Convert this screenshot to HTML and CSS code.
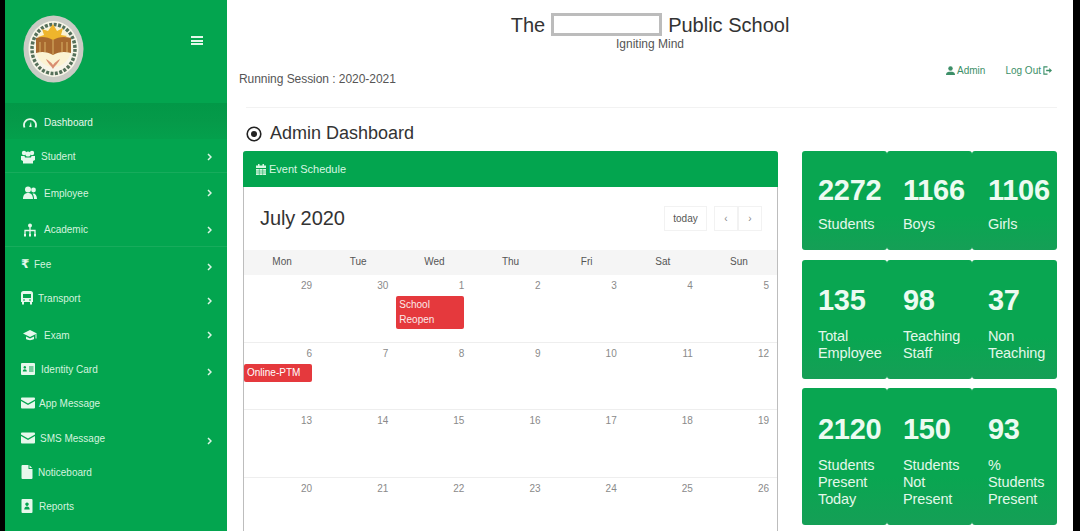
FILE: index.html
```html
<!DOCTYPE html>
<html lang="en">
<head>
<meta charset="utf-8">
<title>Admin Dashboard</title>
<link rel="stylesheet" href="styles.css">
</head>
<body>
<aside class="sidebar">
  <div class="brand">
    <svg class="logo" viewBox="0 0 61 68" aria-label="School crest">
      <ellipse cx="30.5" cy="34" rx="30" ry="33.5" fill="#c9cbc4"/>
      <ellipse cx="30.5" cy="34" rx="25" ry="28" fill="#f7f5e8"/>
      <ellipse cx="30.5" cy="34" rx="21.5" ry="24.5" fill="none" stroke="#55705a" stroke-width="3.5" stroke-dasharray="3 1.5"/>
      <ellipse cx="30.5" cy="32" rx="18" ry="20" fill="#fbf3d2"/>
      <path d="M30 9l4 7 6-3-2 7 6 1-7 5H21l-6-4 6-2-2-6 6 2z" fill="#eeb52c"/>
      <path d="M13 23c6-2 12-1 17 2 5-3 11-4 18-2v15c-7-2-13-1-18 2-5-3-11-4-17-2z" fill="#a8692f"/>
      <path d="M30 25v15M17 27v10M22 27v10M39 27v10M44 27v10" stroke="#c99a55" stroke-width="1.5"/>
      <path d="M23 44c2 5 5 6 7 10 2-4 5-5 7-10-3 2-5 3-7 6-2-3-4-4-7-6z" fill="#d98f72"/>
    </svg>
    <button class="burger" aria-label="Toggle menu"><span></span><span></span><span></span></button>
  </div>
  <nav class="menu">
    <a class="item active">
      <svg class="ic gap-dash" viewBox="0 0 14 14"><path d="M1.500 12.500A6 6 0 1 1 12.500 12.500" fill="none" stroke="currentColor" stroke-width="1.800"/><path d="M6.200 12L8 6.500l.6 5.500z" fill="currentColor"/></svg>
      <span>Dashboard</span></a>
    <a class="item lined outdent">
      <svg class="ic gap-student" viewBox="0 0 14 14"><circle cx="3" cy="3" r="2.200" fill="currentColor"/><circle cx="11" cy="3" r="2.200" fill="currentColor"/><circle cx="7" cy="4" r="2.600" fill="currentColor"/><path d="M0 6h3.500L4 7.500h6L10.500 6H14v4l-2 1v2.500H2V11l-2-1z" fill="currentColor"/></svg>
      <span>Student</span><svg class="chev" viewBox="0 0 5 8"><path d="M1 1l3 3-3 3" fill="none" stroke="currentColor" stroke-width="1.500"/></svg></a>
    <a class="item tall">
      <svg class="ic gap-dash" viewBox="0 0 14 14"><circle cx="5" cy="3.500" r="3" fill="currentColor"/><circle cx="10.500" cy="4" r="2.400" fill="currentColor"/><path d="M0 13c0-4 2-6 5-6s5 2 5 6zM11 13c0-2-.5-4-1.500-5.500 2.500-.5 4.500 1.500 4.500 5.500z" fill="currentColor"/></svg>
      <span>Employee</span><svg class="chev" viewBox="0 0 5 8"><path d="M1 1l3 3-3 3" fill="none" stroke="currentColor" stroke-width="1.500"/></svg></a>
    <a class="item tall lined">
      <svg class="ic gap-dash" viewBox="0 0 14 14"><circle cx="7" cy="2.500" r="2" fill="currentColor"/><path d="M7 4v3M2 13V7.500h10V13M7 7.500V13" fill="none" stroke="currentColor" stroke-width="1.300"/><path d="M1 11h2v2.500H1zM6 11h2v2.500H6zM11 11h2v2.500h-2z" fill="currentColor"/></svg>
      <span>Academic</span><svg class="chev" viewBox="0 0 5 8"><path d="M1 1l3 3-3 3" fill="none" stroke="currentColor" stroke-width="1.500"/></svg></a>
    <a class="item outdent">
      <span class="rupee">₹</span>
      <span>Fee</span><svg class="chev" viewBox="0 0 5 8"><path d="M1 1l3 3-3 3" fill="none" stroke="currentColor" stroke-width="1.500"/></svg></a>
    <a class="item outdent">
      <svg class="ic ic-s gap-bus" viewBox="0 0 12 14"><path fill-rule="evenodd" d="M2.500 0h7A2.500 2.500 0 0 1 12 2.500V11h-1v2.500H9V11H3v2.500H1V11H0V2.500A2.500 2.500 0 0 1 2.500 0zM2 3v4h8V3zM2 8.500v1h2v-1zM8 8.500v1h2v-1z" fill="currentColor"/></svg>
      <span>Transport</span><svg class="chev" viewBox="0 0 5 8"><path d="M1 1l3 3-3 3" fill="none" stroke="currentColor" stroke-width="1.500"/></svg></a>
    <a class="item tall">
      <svg class="ic gap-dash" viewBox="0 0 14 14"><path d="M7 2l7 3.500L7 9 0 5.500z" fill="currentColor"/><path d="M3 8.500V11c2 1.500 6 1.500 8 0V8.500L7 10.500zM12.500 6.500v4h1v-4.500z" fill="currentColor"/></svg>
      <span>Exam</span><svg class="chev" viewBox="0 0 5 8"><path d="M1 1l3 3-3 3" fill="none" stroke="currentColor" stroke-width="1.500"/></svg></a>
    <a class="item outdent">
      <svg class="ic gap-id" viewBox="0 0 14 12"><path fill-rule="evenodd" d="M1 0h12a1 1 0 0 1 1 1v10a1 1 0 0 1-1 1H1a1 1 0 0 1-1-1V1a1 1 0 0 1 1-1zM3.800 3a1.300 1.300 0 1 0 .01 0zM1.800 8.500h4c0-1.500-.8-2.200-2-2.200s-2 .7-2 2.200zM8 3.500v1h4.500v-1zM8 5.500v1h4.500v-1zM8 7.500v1h4.500v-1z" fill="currentColor"/></svg>
      <span>Identity Card</span><svg class="chev" viewBox="0 0 5 8"><path d="M1 1l3 3-3 3" fill="none" stroke="currentColor" stroke-width="1.500"/></svg></a>
    <a class="item outdent">
      <svg class="ic gap-app" viewBox="0 0 14 11"><path d="M1 0h12a1 1 0 0 1 1 1v1L7 6 0 2V1a1 1 0 0 1 1-1zM0 3.500L7 7.500l7-4V10a1 1 0 0 1-1 1H1a1 1 0 0 1-1-1z" fill="currentColor"/></svg>
      <span>App Message</span></a>
    <a class="item mid outdent">
      <svg class="ic gap-sms" viewBox="0 0 14 11"><path d="M1 0h12a1 1 0 0 1 1 1v1L7 6 0 2V1a1 1 0 0 1 1-1zM0 3.500L7 7.500l7-4V10a1 1 0 0 1-1 1H1a1 1 0 0 1-1-1z" fill="currentColor"/></svg>
      <span>SMS Message</span><svg class="chev" viewBox="0 0 5 8"><path d="M1 1l3 3-3 3" fill="none" stroke="currentColor" stroke-width="1.500"/></svg></a>
    <a class="item outdent">
      <svg class="ic ic-s gap-bus" viewBox="0 0 11 14"><path d="M1 0h6v4h4v9a1 1 0 0 1-1 1H1a1 1 0 0 1-1-1V1a1 1 0 0 1 1-1zM8 .3L10.700 3H8z" fill="currentColor"/></svg>
      <span>Noticeboard</span></a>
    <a class="item outdent">
      <svg class="ic ic-s gap-rep" viewBox="0 0 11 14"><path fill-rule="evenodd" d="M1 0h9a1 1 0 0 1 1 1v12a1 1 0 0 1-1 1H1a1 1 0 0 1-1-1V1a1 1 0 0 1 1-1zM5.500 3.500a1.700 1.700 0 1 0 .01 0zM2.800 10.500h5.400c0-2-1-3-2.700-3s-2.700 1-2.700 3z" fill="currentColor"/></svg>
      <span>Reports</span></a>
  </nav>
</aside>

<main class="main">
  <header class="top">
    <h1 class="school"><span class="school-text">The</span><span class="redact"></span><span class="school-text">Public School</span></h1>
    <p class="motto">Igniting Mind</p>
    <div class="topbar">
      <p class="session">Running Session : 2020-2021</p>
      <div class="links">
        <a class="link"><svg class="link-ic" viewBox="0 0 10 10"><circle cx="5" cy="2.800" r="2.500" fill="currentColor"/><path d="M0 10c0-2 1-3 3-3.500h4c2 .5 3 1.500 3 3.500z" fill="currentColor"/></svg><span>Admin</span></a>
        <a class="link"><span>Log Out</span><svg class="link-ic" viewBox="0 0 10 10"><path d="M5 1H1v8h4" fill="none" stroke="currentColor" stroke-width="1.200"/><path d="M3.500 4.200H7V2.200L10 5 7 7.800V5.800H3.500z" fill="currentColor"/></svg></a>
      </div>
    </div>
  </header>
  <hr class="rule">
  <h2 class="page-title">
    <svg class="title-ic" viewBox="0 0 16 16"><circle cx="8" cy="8" r="6.800" fill="none" stroke="#222" stroke-width="1.600"/><circle cx="8" cy="8" r="3" fill="#222"/></svg>
    <span>Admin Dashboard</span></h2>

  <div class="content">
    <section class="panel">
      <div class="panel-head">
        <svg class="cal-ic" viewBox="0 0 10 11"><path d="M2 0h1.500v1.500h3V0H8v1.500h2V4H0V1.500h2zM0 5h10v6H0z" fill="currentColor"/><path d="M0 7h10M0 9h10M3.300 5v6M6.700 5v6" stroke="#03a54f" stroke-width=".5"/></svg><span>Event Schedule</span>
      </div>
      <div class="toolbar">
        <div class="month">July 2020</div>
        <div class="tools">
          <span class="btn today">today</span>
          <span class="btn-group"><span class="btn arrow">‹</span><span class="btn arrow">›</span></span>
        </div>
      </div>
      <div class="week-head">
        <span>Mon</span><span>Tue</span><span>Wed</span><span>Thu</span><span>Fri</span><span>Sat</span><span>Sun</span>
      </div>
      <div class="week">
        <div class="day"><span class="num">29</span></div>
        <div class="day"><span class="num">30</span></div>
        <div class="day"><span class="num">1</span><span class="event two">School Reopen</span></div>
        <div class="day"><span class="num">2</span></div>
        <div class="day"><span class="num">3</span></div>
        <div class="day"><span class="num">4</span></div>
        <div class="day"><span class="num">5</span></div>
      </div>
      <div class="week">
        <div class="day"><span class="num">6</span><span class="event one">Online-PTM</span></div>
        <div class="day"><span class="num">7</span></div>
        <div class="day"><span class="num">8</span></div>
        <div class="day"><span class="num">9</span></div>
        <div class="day"><span class="num">10</span></div>
        <div class="day"><span class="num">11</span></div>
        <div class="day"><span class="num">12</span></div>
      </div>
      <div class="week">
        <div class="day"><span class="num">13</span></div>
        <div class="day"><span class="num">14</span></div>
        <div class="day"><span class="num">15</span></div>
        <div class="day"><span class="num">16</span></div>
        <div class="day"><span class="num">17</span></div>
        <div class="day"><span class="num">18</span></div>
        <div class="day"><span class="num">19</span></div>
      </div>
      <div class="week">
        <div class="day"><span class="num">20</span></div>
        <div class="day"><span class="num">21</span></div>
        <div class="day"><span class="num">22</span></div>
        <div class="day"><span class="num">23</span></div>
        <div class="day"><span class="num">24</span></div>
        <div class="day"><span class="num">25</span></div>
        <div class="day"><span class="num">26</span></div>
      </div>
    </section>

    <section class="stats">
      <div class="stat-row row-a">
        <div class="stat"><div class="value">2272</div><div class="label">Students</div></div>
        <div class="stat"><div class="value">1166</div><div class="label">Boys</div></div>
        <div class="stat"><div class="value">1106</div><div class="label">Girls</div></div>
      </div>
      <div class="stat-row row-b">
        <div class="stat"><div class="value">135</div><div class="label">Total Employee</div></div>
        <div class="stat"><div class="value">98</div><div class="label">Teaching Staff</div></div>
        <div class="stat"><div class="value">37</div><div class="label">Non Teaching</div></div>
      </div>
      <div class="stat-row row-c">
        <div class="stat"><div class="value">2120</div><div class="label">Students Present Today</div></div>
        <div class="stat"><div class="value">150</div><div class="label">Students Not Present</div></div>
        <div class="stat"><div class="value">93</div><div class="label">% Students Present</div></div>
      </div>
    </section>
  </div>
</main>
</body>
</html>
```

FILE: styles.css
```css
* { box-sizing: border-box; }
html, body { margin: 0; height: 531px; overflow: hidden; }
body {
  display: flex;
  padding: 0 7px 0 5px;
  background: #000;
  font-family: "Liberation Sans", Arial, sans-serif;
  color: #333;
}
p, h1, h2 { margin: 0; font-weight: 400; }

/* Sidebar */
.sidebar { flex: 0 0 222px; height: 531px; background: #03a54f; color: #dcf5e4; }
.brand { height: 103px; display: flex; padding: 15px 24px 0 18px; }
.logo { width: 61px; height: 68px; filter: blur(.6px); }
.burger {
  margin: 21px 0 0 auto; width: 12px; height: 9px; padding: 0; border: 0; background: none;
  display: flex; flex-direction: column; justify-content: space-between;
}
.burger span { display: block; height: 2px; background: #e4f7ea; }
.menu { display: flex; flex-direction: column; }
.item {
  height: 34px; display: flex; align-items: center; padding-left: 18px;
  font-size: 10px; color: #d5f3df; white-space: nowrap;
}
.item.outdent { padding-left: 16px; }
.item.tall { height: 37px; padding-top: 3px; }
.item.mid { height: 35px; padding-top: 1px; }
.item.active {
  height: 36px; padding-top: 2px;
  background: linear-gradient(#029847, #059a49 50%, #04a04c);
  color: #e6f8ec;
}
.item.lined { border-bottom: 1px solid #17ac5c; }
.item.lined.outdent { padding-top: 2px; }
.ic { width: 14px; height: 14px; flex: none; color: #e6f8ec; }
.ic-s { width: 12px; }
.gap-dash { margin-right: 7px; }
.gap-student { margin-right: 6px; }
.gap-bus { margin-right: 5px; }
.gap-id { margin-right: 6px; }
.gap-app { margin-right: 4px; }
.gap-sms { margin-right: 5px; }
.gap-rep { margin-right: 6px; }
.rupee { font: 700 12px "DejaVu Sans", sans-serif; width: 13px; color: #e6f8ec; }
.chev { width: 5px; height: 8px; margin: 5px 15px 0 auto; color: #dcf5e4; }
.item.tall .chev, .item.lined .chev { margin-top: 0; }

/* Main */
.main { flex: 1; min-width: 0; height: 531px; overflow: hidden; background: #fff; padding: 0 16px; }
.top { margin: 0 -16px; padding: 0 16px 0 12px; }
.school {
  padding-top: 13px; height: 36px; margin-left: 4px;
  display: flex; justify-content: center; align-items: center; gap: 6px;
  font-size: 20px; line-height: 25px; color: #333;
}
.school-text { padding-top: 2px; }
.redact { width: 111px; height: 23px; border: 3px solid #bcbcbc; background: #fff; }
.motto { margin: 1px 0 0 4px; height: 15px; line-height: 15px; text-align: center; font-size: 12px; color: #555; }
.topbar { display: flex; justify-content: space-between; margin-top: 11px; height: 22px; }
.session { margin-top: 9px; font-size: 12px; line-height: 14px; color: #555; letter-spacing: -.05px; }
.links { display: flex; gap: 20px; padding-right: 5px; }
.link { display: flex; align-items: center; gap: 2px; height: 14px; font-size: 10px; color: #3d8f68; white-space: nowrap; }
.link-ic { width: 9px; height: 9px; }
.rule { margin: 22px 0 0 3px; border: 0; border-top: 1px solid #f2f2f2; }
.page-title {
  margin: 15px 0 7px 3px; height: 21px; display: flex; align-items: center; gap: 8px;
  font-size: 18px; line-height: 21px; color: #333;
}
.title-ic { width: 16px; height: 16px; }
.content { display: flex; gap: 24px; align-items: flex-start; }

/* Calendar */
.panel {
  flex: 0 0 535px; border: 1px solid #bdbdbd; border-top: 0; border-radius: 3px 3px 0 0; background: #fff;
}
.panel-head {
  margin: 0 -1px; height: 36px; padding-left: 13px; display: flex; align-items: center; gap: 3px;
  background: #03a54f; color: #d9f7e3; font-size: 11px; border-radius: 3px 3px 0 0;
}
.cal-ic { width: 10px; height: 11px; }
.toolbar { height: 63px; display: flex; justify-content: space-between; align-items: center; padding: 0 15px 0 16px; }
.month { font-size: 20px; color: #333; letter-spacing: -.1px; }
.tools { display: flex; gap: 7px; }
.btn {
  height: 25px; display: flex; align-items: center; justify-content: center;
  border: 1px solid #f2f2f2; font-size: 10px; color: #555;
}
.today { width: 43px; }
.btn-group { display: flex; }
.arrow { width: 24px; font-size: 10px; color: #888; }
.week-head {
  display: grid; grid-template-columns: repeat(7, 1fr); height: 25px; align-items: center; padding-bottom: 2px;
  background: #f5f5f5; font-size: 10px; color: #555; text-align: center;
}
.week { display: grid; grid-template-columns: repeat(7, 1fr); height: 67.5px; border-bottom: 1px solid #eee; }
.day { display: flex; flex-direction: column; padding: 5px 8px 0 0; }
.num { text-align: right; font-size: 10px; line-height: 12px; color: #8a8a8a; }
.event {
  background: #e5393d; border-radius: 2px; color: #fbe9e9; font-size: 10px; padding: 0 3px;
}
.event.two { margin-top: 4px; height: 33px; line-height: 15px; padding-top: 1px; }
.event.one { margin-top: 4px; height: 18px; line-height: 17px; color: #fff; }

/* Stats */
.stats { flex: 0 0 255px; display: flex; flex-direction: column; gap: 9.500px; }
.stat-row { display: grid; grid-template-columns: repeat(3, 85px); }
.row-a { height: 99px; }
.row-b { height: 119px; }
.row-c { height: 137px; }
.stat {
  padding-left: 16px; border-radius: 3px; color: #e3f8ea;
  background: linear-gradient(#09a651 65%, #159f56);
}
.value { font-size: 29px; line-height: 30px; font-weight: 700; color: #ecfbf1; letter-spacing: -.3px; }
.label { font-size: 14.500px; line-height: 17px; padding-right: 12px; letter-spacing: -.1px; }
.row-a .stat { padding-top: 24px; }
.row-a .value { margin-bottom: 11px; }
.row-b .stat { padding-top: 25px; }
.row-b .value { margin-bottom: 13px; }
.row-c .stat { padding-top: 26px; }
.row-c .value { margin-bottom: 13px; }
```
